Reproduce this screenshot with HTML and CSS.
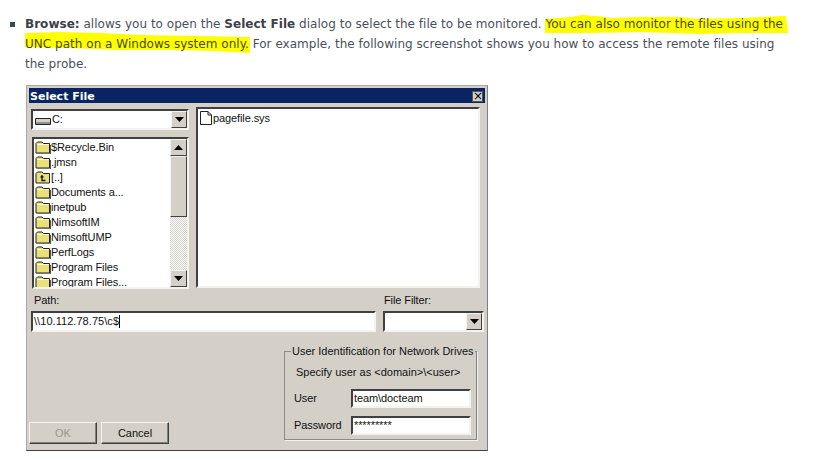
FILE: index.html
```html
<!DOCTYPE html>
<html lang="en">
<head>
<meta charset="utf-8">
<title>Browse</title>
<link rel="stylesheet" href="styles.css">
</head>
<body>
<svg class="defs" width="0" height="0">
  <symbol id="folder" viewBox="0 0 16 13"><path d="M1 2.500 2.500 1H7L8.500 2.500H14.500V12H1Z" fill="#e8e078" stroke="#222"/><path d="M2 3.500H14" stroke="#fffbd0"/><path d="M15.500 4V13H2.500" fill="none" stroke="#555"/></symbol>
  <symbol id="up" viewBox="0 0 16 13"><path d="M1 2.500 2.500 1H7L8.500 2.500H14.500V12H1Z" fill="#e8e078" stroke="#222"/><path d="M7 4V9.500H10.500M5.500 6H8.500" fill="none" stroke="#111" stroke-width="1.300"/></symbol>
  <symbol id="down" viewBox="0 0 9 5"><path d="M0 0H9L4.500 5Z" fill="#000"/></symbol>
  <symbol id="arrowup" viewBox="0 0 9 5"><path d="M0 5H9L4.500 0Z" fill="#000"/></symbol>
</svg>
<main class="doc">
  <svg class="marks" width="814" height="60" viewBox="0 0 814 60">
    <path d="M545 19 558 18 570 17 582 15 596 16 612 18 640 17 680 17 698 19 740 18 786 16 788 33 740 33 700 34 640 32 590 33 545 33Z" fill="#ffff00"/>
    <path d="M25 33 60 32 100 33 140 35 200 36 250 37 250 53 215 51 180 50 120 50 70 48 25 47Z" fill="#ffff00"/>
  </svg>
  <div class="item">
    <span class="bullet"></span>
    <p class="para"><b>Browse:</b> allows you to open the <b>Select File</b> dialog to select the file to be monitored. <span class="hl">You can also monitor the files using the</span> <span class="hl">UNC path on a Windows system only.</span> For example, the following screenshot shows you how to access the remote files using the probe.</p>
  </div>

  <section class="dialog">
    <header class="titlebar"><span>Select File</span><span class="close">×</span></header>
    <div class="panes">
      <div class="left">
        <div class="combo drive">
          <span class="comboval"><svg class="drivei" width="16" height="10" viewBox="0 0 16 10"><path d="M.500 3.500H15.500V9.500H.500Z" fill="#d4d0c8" stroke="#222"/><path d="M1 8H15" stroke="#555"/></svg>C:</span>
          <span class="arrowbtn"><svg width="9" height="5"><use href="#down"/></svg></span>
        </div>
        <div class="dirlist">
          <ul class="dirs">
            <li><svg class="fi"><use href="#folder"/></svg>$Recycle.Bin</li>
            <li><svg class="fi"><use href="#folder"/></svg>.jmsn</li>
            <li><svg class="fi"><use href="#up"/></svg>[..]</li>
            <li><svg class="fi"><use href="#folder"/></svg>Documents a...</li>
            <li><svg class="fi"><use href="#folder"/></svg>inetpub</li>
            <li><svg class="fi"><use href="#folder"/></svg>NimsoftIM</li>
            <li><svg class="fi"><use href="#folder"/></svg>NimsoftUMP</li>
            <li><svg class="fi"><use href="#folder"/></svg>PerfLogs</li>
            <li><svg class="fi"><use href="#folder"/></svg>Program Files</li>
            <li><svg class="fi"><use href="#folder"/></svg>Program Files...</li>
          </ul>
          <div class="scroll">
            <span class="sbtn"><svg width="9" height="5"><use href="#arrowup"/></svg></span>
            <span class="thumb"></span>
            <span class="track"></span>
            <span class="sbtn"><svg width="9" height="5"><use href="#down"/></svg></span>
          </div>
        </div>
      </div>
      <div class="filelist">
        <div class="file"><svg width="12" height="14" viewBox="0 0 12 14"><path d="M.500.500H8L11.500 4V13.500H.500Z" fill="#fff" stroke="#222"/><path d="M8 .500V4H11.500" fill="none" stroke="#222"/></svg>pagefile.sys</div>
      </div>
    </div>
    <div class="pathrow">
      <div class="pathcol"><label class="lbl">Path:</label><div class="input path">\\10.112.78.75\c$<i class="caret"></i></div></div>
      <div class="filtercol"><label class="lbl">File Filter:</label><div class="combo filter"><span class="comboval"></span><span class="arrowbtn"><svg width="9" height="5"><use href="#down"/></svg></span></div></div>
    </div>
    <div class="bottom">
      <div class="buttons"><button class="btn off">OK</button><button class="btn">Cancel</button></div>
      <fieldset class="group">
        <legend>User Identification for Network Drives</legend>
        <div class="hint">Specify user as &lt;domain&gt;\&lt;user&gt;</div>
        <div class="field"><span>User</span><div class="input small">team\docteam</div></div>
        <div class="field"><span>Password</span><div class="input small">*********</div></div>
      </fieldset>
    </div>
  </section>
</main>
</body>
</html>
```

FILE: styles.css
```css
* { box-sizing: border-box; }
html, body { margin: 0; padding: 0; background: #fff; }
body { width: 814px; height: 461px; overflow: hidden; }
.defs { position: absolute; }
.doc { position: relative; padding: 14px 0 0 25px; isolation: isolate; }
.marks { position: absolute; left: 0; top: 0; z-index: -1; }
.item { position: relative; }
.bullet { position: absolute; left: -15px; top: 8px; width: 5px; height: 5px; background: #3f4650; }
.para { margin: 0; width: 770px; font: 12px/20px "DejaVu Sans", Verdana, sans-serif; letter-spacing: .025px; color: #4a4f5c; }
.para b { color: #3c4049; }
.hl { color: #4a4a10; }

.dialog { width: 462px; height: 366px; margin: 11px 0 0 1px; padding: 3px; background: #d4d0c8;
  border: 1px solid #a9a9a9; border-bottom-color: #404040; border-right-color: #808080;
  font: 11px/13px "Liberation Sans", Arial, sans-serif; color: #111; letter-spacing: -.1px; }
.titlebar { height: 15px; margin: -1px -1px 0; background: #0a2463; color: #fff; display: flex; align-items: center; justify-content: space-between; padding: 1px 2px 0 1px;
  font: bold 11px/15px "DejaVu Sans", sans-serif; letter-spacing: 0; }
.close { width: 11px; height: 11px; background: #d4d0c8; color: #000; border: 1px solid #555; font: 12px/9px "DejaVu Sans", sans-serif; text-align: center; }
.panes { display: flex; padding: 4px 0 0 1px; height: 184px; }
.left { width: 158px; margin-top: 2px; }
.combo { display: flex; align-items: stretch; background: #fff; border: 2px solid; border-color: #404040 #f4f3ef #f4f3ef #404040; height: 21px; }
.comboval { flex: 1; display: flex; align-items: center; padding-left: 2px; font-size: 11px; }
.drivei { margin-right: 1px; }
.arrowbtn { width: 16px; margin: 0; display: flex; align-items: center; justify-content: center; background: #d4d0c8; border: 1px solid; border-color: #f4f3ef #404040 #404040 #f4f3ef; }
.dirlist { margin: 7px 0 0 1px; height: 152px; display: flex; overflow: hidden; background: #fff; border: 2px solid; border-color: #404040 #f4f3ef #f4f3ef #404040; }
.dirs { flex: 1; list-style: none; margin: 0; padding: 1px 0 0 1px; overflow: hidden; }
.dirs li { height: 15px; display: flex; align-items: center; white-space: nowrap; }
.fi { width: 16px; height: 13px; flex: none; margin-right: 0; }
.scroll { width: 17px; flex: none; display: flex; flex-direction: column; background: repeating-conic-gradient(#d4d0c8 0 25%, #fff 0 50%) 0 0/2px 2px; }
.sbtn { height: 17px; flex: none; display: flex; align-items: center; justify-content: center; background: #d4d0c8; border: 1px solid; border-color: #f4f3ef #404040 #404040 #f4f3ef; }
.thumb { height: 61px; flex: none; background: #d4d0c8; border: 1px solid; border-color: #f4f3ef #404040 #404040 #f4f3ef; }
.track { flex: 1; }
.filelist { width: 284px; height: 181px; margin-left: 7px; background: #fff; padding: 2px; border: 2px solid; border-color: #404040 #f4f3ef #f4f3ef #404040; }
.file { display: flex; align-items: center; gap: 1px; }
.pathrow { display: flex; margin: 5px 0 0 1px; }
.pathcol { width: 352px; }
.filtercol { width: 101px; }
.lbl { display: block; height: 19px; padding: 2px 0 0 3px; }
.filtercol .lbl { padding-left: 1px; }
.input { background: #fff; border: 2px solid; border-color: #404040 #f4f3ef #f4f3ef #404040; display: flex; align-items: center; padding-left: 1px; }
.path { width: 345px; height: 21px; letter-spacing: .05px; }
.caret { width: 1px; height: 13px; background: #000; }
.filter { width: 101px; }
.bottom { display: flex; justify-content: space-between; }
.buttons { display: flex; gap: 4px; align-self: flex-end; margin: 0 0 -4px -1px; }
.btn { width: 68px; height: 22px; padding: 0; background: #d4d0c8; font: inherit; letter-spacing: 0; color: #111; border: 1px solid; border-color: #f4f3ef #404040 #404040 #f4f3ef; box-shadow: inset -1px -1px #808080; }
.off { color: #9a978f; }
.group { width: 193px; height: 95px; margin: 13px 7px 0 0; padding: 0 0 0 9px; border: 1px solid #8f8c85; border-right-color: #808080; box-shadow: 1px 1px #f4f3ef; }
.group legend { padding: 0 1px; margin-left: -3px; white-space: nowrap; letter-spacing: 0; }
.hint { margin: 8px 0 0 2px; height: 22px; letter-spacing: 0; }
.field { display: flex; align-items: center; justify-content: space-between; height: 20px; margin-bottom: 7px; padding-right: 5px; }
.field:last-child { margin-bottom: 0; }
.small { width: 120px; height: 19px; }
```
